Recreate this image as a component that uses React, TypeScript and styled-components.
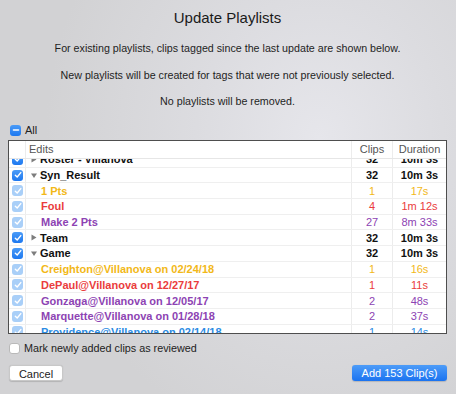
import React, { useEffect, useRef } from 'react'
import styled, { createGlobalStyle } from 'styled-components'

const GlobalStyle = createGlobalStyle`
  body {
    margin: 0;
    font-family: "Liberation Sans", Arial, sans-serif;
  }
`

const Window = styled.div`
  width: 456px;
  height: 394px;
  box-sizing: border-box;
  padding: 0 9px 0 8px;
  display: flex;
  flex-direction: column;
  background: radial-gradient(ellipse 60% 80% at 70% 35%, #e6e6eb 0%, #dcdce0 45%, #d2d2d4 100%);
  color: #222;
  overflow: hidden;
`

const Title = styled.div`
  font-size: 15px;
  text-align: center;
  margin-top: 9px;
  height: 18px;
  line-height: 18px;
  color: #1a1a1a;
`

const Note = styled.div<{ $gap: number }>`
  font-size: 10.7px;
  text-align: center;
  height: 16px;
  line-height: 16px;
  margin-top: ${(p) => p.$gap}px;
  color: #1e1e1e;
`

const CheckRow = styled.label<{ $size: number; $top: number; $left: number }>`
  display: flex;
  align-items: center;
  gap: 4px;
  margin-top: ${(p) => p.$top}px;
  margin-left: ${(p) => p.$left}px;
  font-size: ${(p) => p.$size}px;
  color: #222;
`

const Box = styled.span<{ $kind: 'on' | 'dim' | 'mixed' | 'off'; $size?: number }>`
  flex: none;
  width: ${(p) => p.$size ?? 11}px;
  height: ${(p) => p.$size ?? 11}px;
  border-radius: 3px;
  box-sizing: border-box;
  display: flex;
  align-items: center;
  justify-content: center;
  background: ${(p) =>
    p.$kind === 'on' || p.$kind === 'mixed'
      ? 'linear-gradient(#4a9bf7, #1d78f0)'
      : p.$kind === 'dim'
      ? '#a9cff8'
      : '#fff'};
  border: ${(p) => (p.$kind === 'off' ? '1px solid #b9b9b9' : 'none')};
`

const Table = styled.div`
  margin-top: 4px;
  height: 192px;
  border: 1px solid #4e4e4e;
  background: #fff;
  display: flex;
  flex-direction: column;
  overflow: hidden;
`

const Grid = styled.div`
  display: grid;
  grid-template-columns: 16px 1fr 41px 54px;
`

const Header = styled(Grid)`
  height: 17px;
  flex: none;
  border-bottom: 1px solid #e6e6e6;
`

const HeadCell = styled.div<{ $center?: boolean }>`
  font-size: 11px;
  color: #555;
  line-height: 17px;
  padding-left: ${(p) => (p.$center ? 0 : 3)}px;
  text-align: ${(p) => (p.$center ? 'center' : 'left')};
  border-left: 1px solid #ececec;
  &:first-child {
    border-left: none;
  }
`

const Body = styled.div`
  flex: 1;
  overflow: hidden;
`

const Row = styled(Grid)`
  height: 15.7px;
  box-sizing: border-box;
  border-bottom: 1px solid #efefef;
  font-size: 11px;
  font-weight: bold;
`

const Cell = styled.div<{ $center?: boolean; $color: string; $light?: boolean }>`
  display: flex;
  align-items: center;
  justify-content: ${(p) => (p.$center ? 'center' : 'flex-start')};
  color: ${(p) => p.$color};
  font-weight: ${(p) => (p.$light ? 'normal' : 'bold')};
  border-left: 1px solid #ececec;
  white-space: nowrap;
  overflow: hidden;
`

const CheckCell = styled.div`
  display: flex;
  align-items: center;
  justify-content: center;
  padding-left: 1px;
`

const Label = styled.span<{ $indent: number }>`
  padding-left: ${(p) => p.$indent}px;
  display: flex;
  align-items: center;
  gap: 3px;
`

const Footer = styled.div`
  display: flex;
  justify-content: space-between;
  align-items: center;
  margin-top: 11px;
`

const Button = styled.button<{ $primary?: boolean }>`
  height: 16px;
  padding: 0;
  width: ${(p) => (p.$primary ? 95 : 54)}px;
  margin-left: ${(p) => (p.$primary ? 0 : 1)}px;
  border-radius: 3px;
  font-family: "Liberation Sans", Arial, sans-serif;
  font-size: 11px;
  line-height: 16px;
  color: ${(p) => (p.$primary ? '#fff' : '#222')};
  border: ${(p) => (p.$primary ? 'none' : '1px solid #c8c8c8')};
  background: ${(p) => (p.$primary ? 'linear-gradient(#4d9cf8, #1b73f0)' : '#fff')};
  box-shadow: 0 0.5px 1px rgba(0, 0, 0, 0.15);
`

const Check = () => (
  <svg width="8" height="8" viewBox="0 0 8 8">
    <path d="M1.3 4.2 L3.2 6 L6.8 1.6" fill="none" stroke="#fff" strokeWidth="1.4" strokeLinecap="round" strokeLinejoin="round" />
  </svg>
)

const Minus = () => (
  <svg width="8" height="8" viewBox="0 0 8 8">
    <path d="M1.5 4 H6.5" stroke="#fff" strokeWidth="1.6" strokeLinecap="round" />
  </svg>
)

const Disclosure = ({ open }: { open: boolean }) => (
  <svg width="6" height="7" viewBox="0 0 6 7">
    {open ? <path d="M0 1.5 H6 L3 6 Z" fill="#7d7d7d" /> : <path d="M0.5 0.5 L5.5 3.5 L0.5 6.5 Z" fill="#7d7d7d" />}
  </svg>
)

type Item = {
  name: string
  clips: number
  duration: string
  color: string
  parent?: 'open' | 'closed'
}

const items: Item[] = [
  { name: 'Roster - Villanova', clips: 32, duration: '10m 3s', color: '#111', parent: 'closed' },
  { name: 'Syn_Result', clips: 32, duration: '10m 3s', color: '#111', parent: 'open' },
  { name: '1 Pts', clips: 1, duration: '17s', color: '#f2b818' },
  { name: 'Foul', clips: 4, duration: '1m 12s', color: '#ea3c3c' },
  { name: 'Make 2 Pts', clips: 27, duration: '8m 33s', color: '#8d43b3' },
  { name: 'Team', clips: 32, duration: '10m 3s', color: '#111', parent: 'closed' },
  { name: 'Game', clips: 32, duration: '10m 3s', color: '#111', parent: 'open' },
  { name: 'Creighton@Villanova on 02/24/18', clips: 1, duration: '16s', color: '#f2b818' },
  { name: 'DePaul@Villanova on 12/27/17', clips: 1, duration: '11s', color: '#ea3c3c' },
  { name: 'Gonzaga@Villanova on 12/05/17', clips: 2, duration: '48s', color: '#8d43b3' },
  { name: 'Marquette@Villanova on 01/28/18', clips: 2, duration: '37s', color: '#8d43b3' },
  { name: 'Providence@Villanova on 02/14/18', clips: 1, duration: '14s', color: '#2b8be3' },
]

const App = () => {
  const bodyRef = useRef<HTMLDivElement>(null)

  // the list in the shot is scrolled a few pixels down
  useEffect(() => {
    if (bodyRef.current) bodyRef.current.scrollTop = 7
  }, [])

  return (
    <Window>
      <GlobalStyle />
      <Title>Update Playlists</Title>
      <Note $gap={13}>For existing playlists, clips tagged since the last update are shown below.</Note>
      <Note $gap={11}>New playlists will be created for tags that were not previously selected.</Note>
      <Note $gap={10}>No playlists will be removed.</Note>
      <CheckRow $size={11} $top={15} $left={2}>
        <Box $kind="mixed">
          <Minus />
        </Box>
        All
      </CheckRow>
      <Table>
        <Header>
          <HeadCell />
          <HeadCell>Edits</HeadCell>
          <HeadCell $center>Clips</HeadCell>
          <HeadCell $center>Duration</HeadCell>
        </Header>
        <Body ref={bodyRef}>
          {items.map((it) => (
            <Row key={it.name}>
              <CheckCell>
                <Box $kind={it.parent ? 'on' : 'dim'}>
                  <Check />
                </Box>
              </CheckCell>
              <Cell $color={it.color}>
                {it.parent ? (
                  <Label $indent={5}>
                    <Disclosure open={it.parent === 'open'} />
                    {it.name}
                  </Label>
                ) : (
                  <Label $indent={15}>{it.name}</Label>
                )}
              </Cell>
              <Cell $center $color={it.color} $light={!it.parent}>
                {it.clips}
              </Cell>
              <Cell $center $color={it.color} $light={!it.parent}>
                {it.duration}
              </Cell>
            </Row>
          ))}
        </Body>
      </Table>
      <CheckRow $size={10.8} $top={8} $left={1}>
        <Box $kind="off" $size={11} />
        Mark newly added clips as reviewed
      </CheckRow>
      <Footer>
        <Button>Cancel</Button>
        <Button $primary>Add 153 Clip(s)</Button>
      </Footer>
    </Window>
  )
}

export default App
